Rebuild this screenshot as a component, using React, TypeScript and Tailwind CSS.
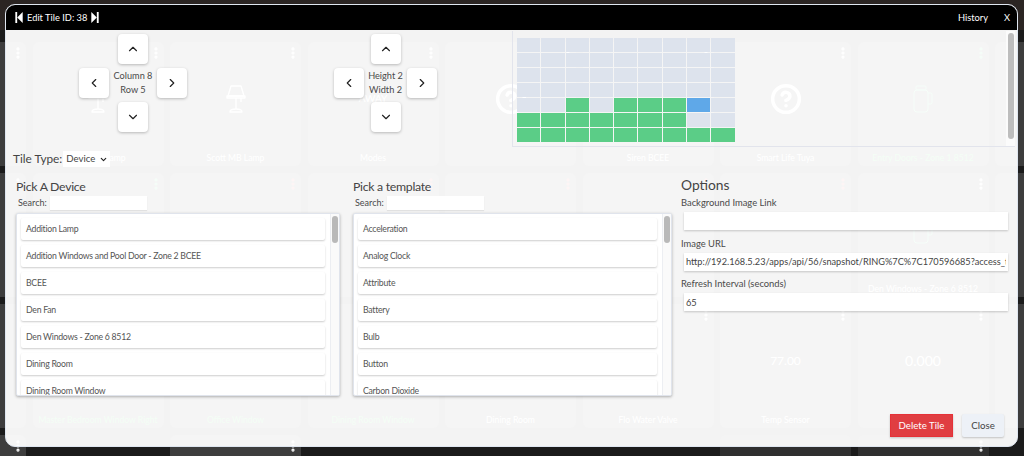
import { ChevronDown, ChevronLeft, ChevronRight, ChevronUp, CircleHelp, EllipsisVertical } from 'lucide-react';
import type { ReactNode } from 'react';

type Tile = { label?: string; green?: boolean; body?: ReactNode; bg?: string; dot?: 'white' | 'green' | 'red' | 'none' };

const Bottle = () => (
  <svg width="20" height="28" viewBox="0 0 20 28" fill="none" stroke="#4ade80" strokeWidth="1">
    <rect x="1" y="5" width="14" height="22" rx="3" />
    <rect x="3" y="1" width="10" height="4" rx="1" />
    <path d="M15 8h2.500a1.500 1.500 0 0 1 1.500 1.500v8a1.500 1.500 0 0 1-1.500 1.500H15" />
  </svg>
);

const TableLamp = () => (
  <svg width="20" height="28" viewBox="0 0 20 28" fill="none" stroke="white" strokeWidth="1.300" strokeLinejoin="round">
    <path d="M5 1h10l3 10H2z" />
    <path d="M1 11h18v2H1z" />
    <path d="M10 13v11M15 13v4" />
    <path d="M4 27c0-2 2-3 6-3s6 1 6 3z" />
  </svg>
);

const question = <CircleHelp size={32} strokeWidth={2.6} color="white" />;

// tiles of the dashboard behind the dialog, row by row
const tiles: Tile[] = [
  {},
  { label: 'Addition Lamp', body: <TableLamp /> },
  { label: 'Scott MB Lamp', body: <TableLamp /> },
  { label: 'Modes', body: <span className="text-[10px] text-white">AWAY</span> },
  { body: question },
  { label: 'Siren BCEE' },
  { label: 'Smart Life Tuya', body: question },
  { label: 'Entry Doors - Zone 1 8512', green: true, dot: 'green', body: <Bottle /> },
  {},

  {},
  { dot: 'green' },
  { dot: 'red' },
  { dot: 'red' },
  { dot: 'red' },
  { dot: 'red' },
  { dot: 'red' },
  { label: 'Den Windows - Zone 6 8512', body: <Bottle /> },
  {},

  { label: 'Dining Window Left', green: true },
  { label: 'Master Bedroom Window Right', green: true },
  { label: 'Office Window', green: true },
  { label: 'Dining Room Window', green: true },
  { label: 'Dining Room' },
  { label: 'Flo Water Valve' },
  { label: 'Temp Sensor', body: <span className="text-[12px] text-white">77.00</span> },
  { body: <span className="text-[14px] text-white">0.000</span> },
  {},

  {},
  { bg: 'bg-[#1b1b1b]', dot: 'none' },
  {},
  { bg: 'bg-[#1b1b1b]', dot: 'none' },
  { bg: 'bg-[#1b1b1b]', dot: 'none' },
  { bg: 'bg-[#1b1b1b]', dot: 'none' },
  { bg: 'bg-[#2f2f2f]', dot: 'none' },
  { bg: 'bg-[#2f2f2f]' },
  { bg: 'bg-[#1b1b1b]', dot: 'none' },
];

const dotColors = {
  white: 'text-white',
  green: 'text-[#4ade80]',
  red: 'text-[#ef4444]',
  none: 'hidden',
};

const devices = [
  'Addition Lamp',
  'Addition Windows and Pool Door - Zone 2 BCEE',
  'BCEE',
  'Den Fan',
  'Den Windows - Zone 6 8512',
  'Dining Room',
  'Dining Room Window',
  'Entry Doors - Zone 1 8512',
];

const templates = [
  'Acceleration',
  'Analog Clock',
  'Attribute',
  'Battery',
  'Bulb',
  'Button',
  'Carbon Dioxide',
  'Clock',
];

const NudgeButton = ({ children, className }: { children: ReactNode; className: string }) => (
  <button className={`flex h-[30px] w-[30px] items-center justify-center rounded-[4px] bg-white text-[#222] shadow-[0_1px_3px_rgba(0,0,0,0.25)] ${className}`}>
    {children}
  </button>
);

const Nudge = ({ top, bottom, className }: { top: string; bottom: string; className: string }) => (
  <div className={`grid grid-cols-[30px_auto_30px] grid-rows-[30px_30px_30px] gap-y-[4px] ${className}`}>
    <NudgeButton className="col-start-2 justify-self-center">
      <ChevronUp size={14} />
    </NudgeButton>
    <NudgeButton className="col-start-1 row-start-2">
      <ChevronLeft size={14} />
    </NudgeButton>
    <div className="col-start-2 row-start-2 flex flex-col items-center justify-center text-[9.2px] leading-[14px] text-[#4a4a4a]">
      <span>{top}</span>
      <span>{bottom}</span>
    </div>
    <NudgeButton className="col-start-3 row-start-2">
      <ChevronRight size={14} />
    </NudgeButton>
    <NudgeButton className="col-start-2 row-start-3 justify-self-center">
      <ChevronDown size={14} />
    </NudgeButton>
  </div>
);

const PickList = ({ title, items, className }: { title: string; items: string[]; className: string }) => (
  <div className={`flex flex-col ${className}`}>
    <h2 className="h-[16px] text-[12.3px] leading-[16px] tracking-[-0.3px] text-[#444]">{title}</h2>
    <div className="mt-[1px] flex h-[14px] items-center pl-[2px] text-[9px] text-[#4a4a4a]">
      <span className="w-[32px]">Search:</span>
      <input className="h-[14px] w-[97px] bg-white shadow-[0_1px_1px_rgba(0,0,0,0.08)] outline-none" />
    </div>
    <div className="mt-[3px] flex h-[183px] overflow-hidden rounded-[2px] border border-[#e0e4ec] bg-white shadow-[0_1px_3px_rgba(0,0,0,0.3)]">
      <ul className="flex min-w-0 flex-1 flex-col gap-[5px] overflow-hidden pl-[4px] pr-[5px] pt-[4px]">
        {items.map((item) => (
          <li
            key={item}
            className="flex h-[22px] shrink-0 items-center rounded-[2px] bg-white pl-[5px] text-[8.7px] tracking-[-0.25px] text-[#555] shadow-[0_1px_2px_rgba(0,0,0,0.2)]"
          >
            {item}
          </li>
        ))}
      </ul>
      <div className="w-[9px] shrink-0 border-l border-[#eceef2] bg-[#fafafa] pl-[1px] pt-[2px]">
        <div className="h-[27px] w-[6px] rounded-full bg-[#b9b9b9]" />
      </div>
    </div>
  </div>
);

const Field = ({ label, value }: { label: string; value: string }) => (
  <label className="flex flex-col">
    <span className="h-[14px] text-[9.4px] leading-[14px] text-[#4a4a4a]">{label}</span>
    <input
      readOnly
      value={value}
      className="ml-[3px] mt-[2px] h-[18px] w-[324px] bg-white px-[2px] text-[9.2px] text-[#444] shadow-[0_1px_2px_rgba(0,0,0,0.2)] outline-none"
    />
  </label>
);

const occupied = (row: number, col: number) => {
  if (row === 6) return true;
  if (row === 5) return col < 7;
  if (row === 4) return col === 2 || col === 4 || col === 5 || col === 6;
  return false;
};

export default function App() {
  return (
    <div className="relative h-[456px] w-[1024px] overflow-hidden bg-[#1b1b1b] font-[Lato,sans-serif]">
      {/* Dashboard behind the dialog */}
      <div className="h-[30px] bg-[#2b2523]" />
      <div className="ml-[-105px] grid w-[1240px] grid-cols-[repeat(9,131px)] auto-rows-[124px] gap-x-[6.5px] gap-y-[7px] pt-[12px]">
        {tiles.map((tile, i) => (
          <div key={i} className={`relative flex flex-col items-center rounded-[6px] ${tile.bg ?? 'bg-[#3d3d3d]'}`}>
            <EllipsisVertical
              size={14}
              strokeWidth={3.5}
              className={`absolute right-[1px] top-[4px] ${dotColors[tile.dot ?? 'white']}`}
            />
            <div className="flex flex-1 items-center justify-center pt-[4px]">{tile.body}</div>
            <span className={`mb-[1px] h-[14px] whitespace-nowrap text-[8.6px] leading-[14px] ${tile.green ? 'text-[#22e04a]' : 'text-white'}`}>
              {tile.label}
            </span>
          </div>
        ))}
      </div>

      {/* Edit dialog */}
      <div className="absolute left-[5px] top-[4px] flex h-[443px] w-[1013px] flex-col overflow-hidden rounded-[10px] border border-[#dfe6f0] bg-white/95">
        <header className="flex h-[25px] shrink-0 items-center bg-black pl-[9px] pr-[7px] text-[9.3px] text-white">
          <svg width="8" height="11" viewBox="0 0 8 12" fill="white">
            <rect x="0" y="0" width="2" height="12" />
            <path d="M8 0v12L2 6z" />
          </svg>
          <span className="ml-[4px]">Edit Tile ID: 38</span>
          <svg width="8" height="11" viewBox="0 0 8 12" fill="white" className="ml-[4px]">
            <path d="M0 0v12l6-6z" />
            <rect x="6" y="0" width="2" height="12" />
          </svg>
          <span className="ml-auto">History</span>
          <span className="ml-[16px]">X</span>
        </header>

        <div className="flex h-[118px] shrink-0 items-start">
          <Nudge top="Column 8" bottom="Row 5" className="ml-[73px] mt-[4px] w-[108px]" />
          <Nudge top="Height 2" bottom="Width 2" className="ml-[147px] mt-[4px] w-[103px]" />
          <div className="ml-[75px] mt-[1px] flex h-[116px] w-[503px] border-b border-l border-[#e2e4ec]">
            <div className="ml-[4px] mt-[7px] grid grid-cols-[repeat(9,23.300px)] grid-rows-[repeat(7,14px)] gap-[1px]">
              {Array.from({ length: 63 }, (_, i) => {
                const row = Math.floor(i / 9);
                const col = i % 9;
                const selected = row === 4 && col === 7;
                return (
                  <div
                    key={i}
                    className={selected ? 'bg-[#5fa8e8]' : occupied(row, col) ? 'bg-[#5bcd87]' : 'bg-[#dde3ed]'}
                  />
                );
              })}
            </div>
            <div className="ml-auto w-[9px] bg-[#fbfbfb] px-[1.500px] pt-[2px]">
              <div className="h-[106px] w-[6px] rounded-full bg-[#bdbdbd]" />
            </div>
          </div>
        </div>

        <div className="ml-[7px] mt-[3px] flex h-[16px] shrink-0 items-center">
          <span className="text-[11.8px] text-[#444]">Tile Type:</span>
          <div className="relative ml-[1px] h-[16px] w-[47px]">
            <select className="block h-[16px] w-[47px] appearance-none bg-white pl-[3px] text-[9.6px] text-[#444] outline-none">
              <option>Device</option>
            </select>
            <ChevronDown size={9} strokeWidth={3} className="pointer-events-none absolute right-[2px] top-[4px] text-[#222]" />
          </div>
        </div>

        <div className="ml-[10px] mt-[12px] flex items-start">
          <PickList title="Pick A Device" items={devices} className="w-[324px]" />
          <PickList title="Pick a template" items={templates} className="ml-[13px] w-[319px]" />
          <div className="-mt-[2px] ml-[9px] flex flex-col">
            <h2 className="mb-[3px] h-[16px] text-[13.8px] leading-[16px] text-[#444]">Options</h2>
            <div className="flex flex-col gap-[6.5px]">
              <Field label="Background Image Link" value="" />
              <Field
                label="Image URL"
                value="http://192.168.5.23/apps/api/56/snapshot/RING%7C%7C170596685?access_token=7a1c"
              />
              <Field label="Refresh Interval (seconds)" value="65" />
            </div>
          </div>
        </div>

        <div className="mr-[13px] mt-[18px] flex justify-end gap-[9px] text-[9.700px]">
          <button className="h-[23px] w-[63px] border border-[#e53238] bg-[#e03e42] text-white shadow-[0_1px_2px_rgba(0,0,0,0.2)]">
            Delete Tile
          </button>
          <button className="h-[23px] w-[42px] rounded-[2px] bg-[#edf1f7] text-[#444] shadow-[0_1px_2px_rgba(0,0,0,0.2)]">
            Close
          </button>
        </div>
      </div>
    </div>
  );
}
